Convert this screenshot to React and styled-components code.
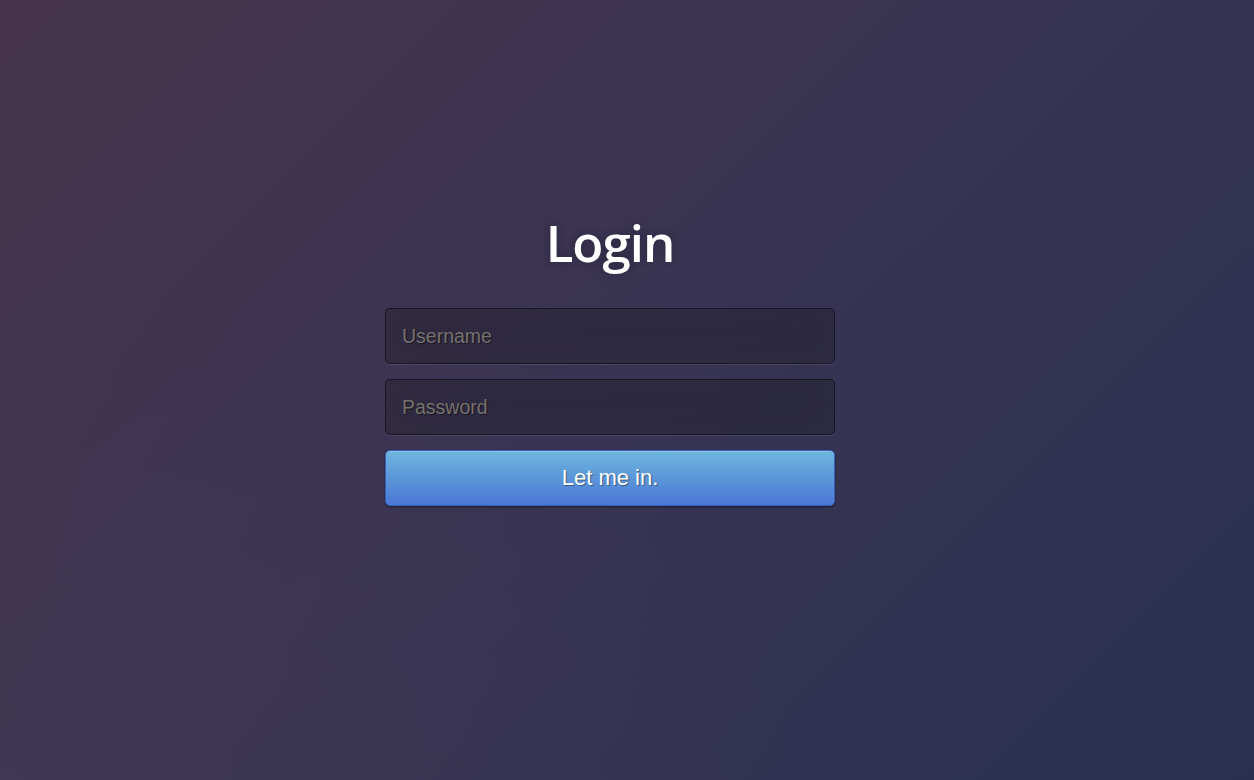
import React from "react";
import styled, { createGlobalStyle } from "styled-components";

const GlobalStyle = createGlobalStyle`
  * {
    box-sizing: border-box;
  }

  html,
  body {
    margin: 0;
    height: 100%;
  }

  body {
    font-family: "Open Sans", "Liberation Sans", sans-serif;
    background-color: #35304f;
    background-image: radial-gradient(
        ellipse at 0% 100%,
        rgba(70, 60, 85, 0.35) 0%,
        rgba(70, 60, 85, 0) 45%
      ),
      linear-gradient(135deg, #46344c 0%, #3a3453 45%, #2a3150 100%);
  }
`;

const Page = styled.main`
  min-height: 100vh;
  display: flex;
  justify-content: center;
  align-items: flex-start;
  padding: 217px 34px 0 0;
`;

const LoginBox = styled.form`
  width: 450px;
  display: flex;
  flex-direction: column;
  gap: 15px;
`;

const Title = styled.h1`
  margin: 0 0 25px;
  font-family: "Open Sans", sans-serif;
  font-size: 51px;
  font-weight: 600;
  line-height: 51px;
  letter-spacing: -1px;
  text-align: center;
  color: #fff;
  text-shadow: 0 0 10px rgba(0, 0, 0, 0.3);
`;

const Field = styled.input`
  width: 100%;
  height: 56px;
  margin: 0;
  padding: 0 16px;
  font-family: "Liberation Sans", Arial, sans-serif;
  font-size: 19.5px;
  color: #fff;
  background: rgba(0, 0, 0, 0.22);
  border: 1px solid rgba(0, 0, 0, 0.45);
  border-radius: 5px;
  outline: none;
  text-shadow: 1px 1px 1px rgba(0, 0, 0, 0.3);
  box-shadow: inset 0 -5px 45px rgba(100, 100, 100, 0.08),
    0 1px 1px rgba(255, 255, 255, 0.1);

  &::placeholder {
    color: #75726f;
    text-shadow: 1px 1px 1px rgba(0, 0, 0, 0.5);
  }
`;

const Submit = styled.button`
  width: 100%;
  height: 56px;
  margin: 0;
  padding: 0;
  font-family: "Liberation Sans", Arial, sans-serif;
  font-size: 22px;
  color: #fff;
  background-color: #4a77d4;
  background-image: linear-gradient(to bottom, #6eb6de, #4a77d4);
  border: 1px solid #3762bc;
  border-radius: 5px;
  text-shadow: 1px 1px 1px rgba(0, 0, 0, 0.4);
  box-shadow: inset 0 1px 0 rgba(255, 255, 255, 0.2),
    0 1px 2px rgba(0, 0, 0, 0.5);
  cursor: pointer;
`;

export default function App() {
  return (
    <>
      <GlobalStyle />
      <Page>
        <LoginBox onSubmit={(e) => e.preventDefault()}>
          <Title>Login</Title>
          <Field type="text" name="u" placeholder="Username" />
          <Field type="password" name="p" placeholder="Password" />
          <Submit type="submit">Let me in.</Submit>
        </LoginBox>
      </Page>
    </>
  );
}
